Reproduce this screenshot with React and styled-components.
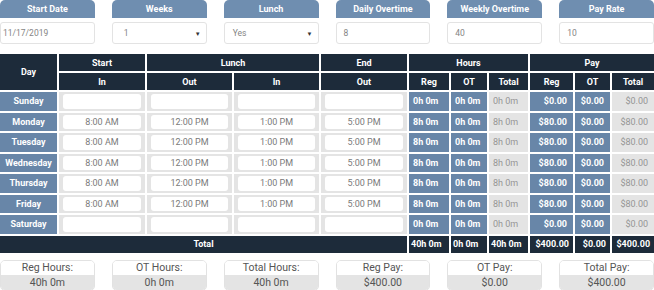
import React from "react";
import styled, { createGlobalStyle } from "styled-components";

const Global = createGlobalStyle`
  html, body { margin: 0; padding: 0; background: #ffffff; }
  body { font-family: Roboto, "Liberation Sans", Arial, sans-serif; }
  * { box-sizing: border-box; }
`;

const Page = styled.div`
  width: 654px;
  overflow: hidden;
`;

const FieldGrid = styled.div`
  display: grid;
  grid-template-columns: repeat(6, 1fr);
  column-gap: 17px;
`;

const Field = styled.div`
  display: flex;
  flex-direction: column;
  gap: 4px;
`;

const FieldLabel = styled.div`
  height: 18px;
  line-height: 18px;
  background: #6f8eb0;
  color: #ffffff;
  font-size: 9px;
  font-weight: 700;
  text-align: center;
  border-radius: 5px 5px 0 0;
`;

const FieldBox = styled.div`
  height: 22px;
  border: 1px solid #e3e3e3;
  border-radius: 3px;
  display: flex;
  align-items: center;
  justify-content: space-between;
  padding: 0 5px 0 ${(p) => p.$pad}px;
  font-size: 8.5px;
  color: #858585;
`;

const Arrow = styled.span`
  font-size: 6px;
  color: #333;
`;

const Sheet = styled.table`
  border-collapse: separate;
  border-spacing: 2px;
  table-layout: fixed;
  width: 658px;
  margin: 8px -2px 0;
`;

const HeadCell = styled.th`
  background: #1d2b3a;
  color: #ffffff;
  font-size: 9px;
  font-weight: 700;
  height: 17px;
  padding: 0;
  text-align: center;
  line-height: 10px;
`;

const DayCell = styled.th`
  background: #6886a8;
  color: #ffffff;
  font-size: 9px;
  font-weight: 700;
  height: 18.5px;
  padding: 0;
  text-align: center;
  line-height: 10px;
`;

const InputCell = styled.td`
  background: #e4e4e4;
  padding: 2px 4px;
  height: 18.5px;
  line-height: 10px;
`;

const TimeBox = styled.div`
  height: 14.5px;
  line-height: 14.5px;
  background: #ffffff;
  border-radius: 3px;
  font-size: 9px;
  color: #7a7a7a;
  text-align: center;
`;

const ValueCell = styled.td`
  height: 18.5px;
  line-height: 10px;
  padding: ${(p) => (p.$right ? "0 6px 0 0" : "0 0 0 4px")};
  text-align: ${(p) => (p.$right ? "right" : "left")};
  font-size: 9px;
  white-space: nowrap;
  background: ${(p) => (p.$muted ? "#e4e4e4" : "#6886a8")};
  color: ${(p) => (p.$muted ? "#959595" : "#ffffff")};
  font-weight: ${(p) => (p.$muted ? 400 : 700)};
`;

const TotalCell = styled.td`
  background: #1d2b3a;
  color: #ffffff;
  font-size: 9px;
  font-weight: 700;
  height: 17px;
  line-height: 10px;
  padding: 0 ${(p) => (p.$right ? "4px" : "2px")};
  text-align: ${(p) => (p.$right ? "right" : p.$center ? "center" : "left")};
  white-space: nowrap;
`;

const SummaryGrid = styled(FieldGrid)`
  margin-top: 5px;
`;

const SummaryBox = styled.div`
  border: 1px solid #e2e2e2;
  border-radius: 5px;
  overflow: hidden;
  display: flex;
  flex-direction: column;
`;

const SummaryLabel = styled.div`
  height: 14px;
  line-height: 14px;
  background: #ffffff;
  text-align: center;
  font-size: 10.5px;
  color: #555555;
`;

const SummaryValue = styled.div`
  height: 15px;
  line-height: 15px;
  background: #e4e4e4;
  text-align: center;
  font-size: 10.5px;
  color: #555555;
`;

const settings = [
  { label: "Start Date", value: "11/17/2019", pad: 2 },
  { label: "Weeks", value: "1", pad: 11, select: true },
  { label: "Lunch", value: "Yes", pad: 8, select: true },
  { label: "Daily Overtime", value: "8", pad: 7 },
  { label: "Weekly Overtime", value: "40", pad: 7 },
  { label: "Pay Rate", value: "10", pad: 7 },
];

const worked = ["8:00 AM", "12:00 PM", "1:00 PM", "5:00 PM"];
const days = [
  { name: "Sunday", on: false },
  { name: "Monday", on: true },
  { name: "Tuesday", on: true },
  { name: "Wednesday", on: true },
  { name: "Thursday", on: true },
  { name: "Friday", on: true },
  { name: "Saturday", on: false },
];

const summary = [
  ["Reg Hours:", "40h 0m"],
  ["OT Hours:", "0h 0m"],
  ["Total Hours:", "40h 0m"],
  ["Reg Pay:", "$400.00"],
  ["OT Pay:", "$0.00"],
  ["Total Pay:", "$400.00"],
];

const widths = [57, 86, 85, 85, 86, 40, 36, 39, 43, 35, 42];

export default function App() {
  return (
    <Page>
      <Global />
      <FieldGrid>
        {settings.map((s) => (
          <Field key={s.label}>
            <FieldLabel>{s.label}</FieldLabel>
            <FieldBox $pad={s.pad}>
              <span>{s.value}</span>
              {s.select && <Arrow>▼</Arrow>}
            </FieldBox>
          </Field>
        ))}
      </FieldGrid>

      <Sheet>
        <colgroup>
          {widths.map((w, i) => (
            <col key={i} style={{ width: w }} />
          ))}
        </colgroup>
        <thead>
          <tr>
            <HeadCell rowSpan={2}>Day</HeadCell>
            <HeadCell>Start</HeadCell>
            <HeadCell colSpan={2}>Lunch</HeadCell>
            <HeadCell>End</HeadCell>
            <HeadCell colSpan={3}>Hours</HeadCell>
            <HeadCell colSpan={3}>Pay</HeadCell>
          </tr>
          <tr>
            <HeadCell>In</HeadCell>
            <HeadCell>Out</HeadCell>
            <HeadCell>In</HeadCell>
            <HeadCell>Out</HeadCell>
            <HeadCell>Reg</HeadCell>
            <HeadCell>OT</HeadCell>
            <HeadCell>Total</HeadCell>
            <HeadCell>Reg</HeadCell>
            <HeadCell>OT</HeadCell>
            <HeadCell>Total</HeadCell>
          </tr>
        </thead>
        <tbody>
          {days.map((d) => (
            <tr key={d.name}>
              <DayCell>{d.name}</DayCell>
              {worked.map((t, i) => (
                <InputCell key={i}>
                  <TimeBox>{d.on ? t : ""}</TimeBox>
                </InputCell>
              ))}
              <ValueCell>{d.on ? "8h 0m" : "0h 0m"}</ValueCell>
              <ValueCell>0h 0m</ValueCell>
              <ValueCell $muted>{d.on ? "8h 0m" : "0h 0m"}</ValueCell>
              <ValueCell $right>{d.on ? "$80.00" : "$0.00"}</ValueCell>
              <ValueCell $right>$0.00</ValueCell>
              <ValueCell $right $muted>
                {d.on ? "$80.00" : "$0.00"}
              </ValueCell>
            </tr>
          ))}
          <tr>
            <TotalCell colSpan={5} $center>
              Total
            </TotalCell>
            <TotalCell>40h 0m</TotalCell>
            <TotalCell>0h 0m</TotalCell>
            <TotalCell>40h 0m</TotalCell>
            <TotalCell $right>$400.00</TotalCell>
            <TotalCell $right>$0.00</TotalCell>
            <TotalCell $right>$400.00</TotalCell>
          </tr>
        </tbody>
      </Sheet>

      <SummaryGrid>
        {summary.map(([label, value]) => (
          <SummaryBox key={label}>
            <SummaryLabel>{label}</SummaryLabel>
            <SummaryValue>{value}</SummaryValue>
          </SummaryBox>
        ))}
      </SummaryGrid>
    </Page>
  );
}
